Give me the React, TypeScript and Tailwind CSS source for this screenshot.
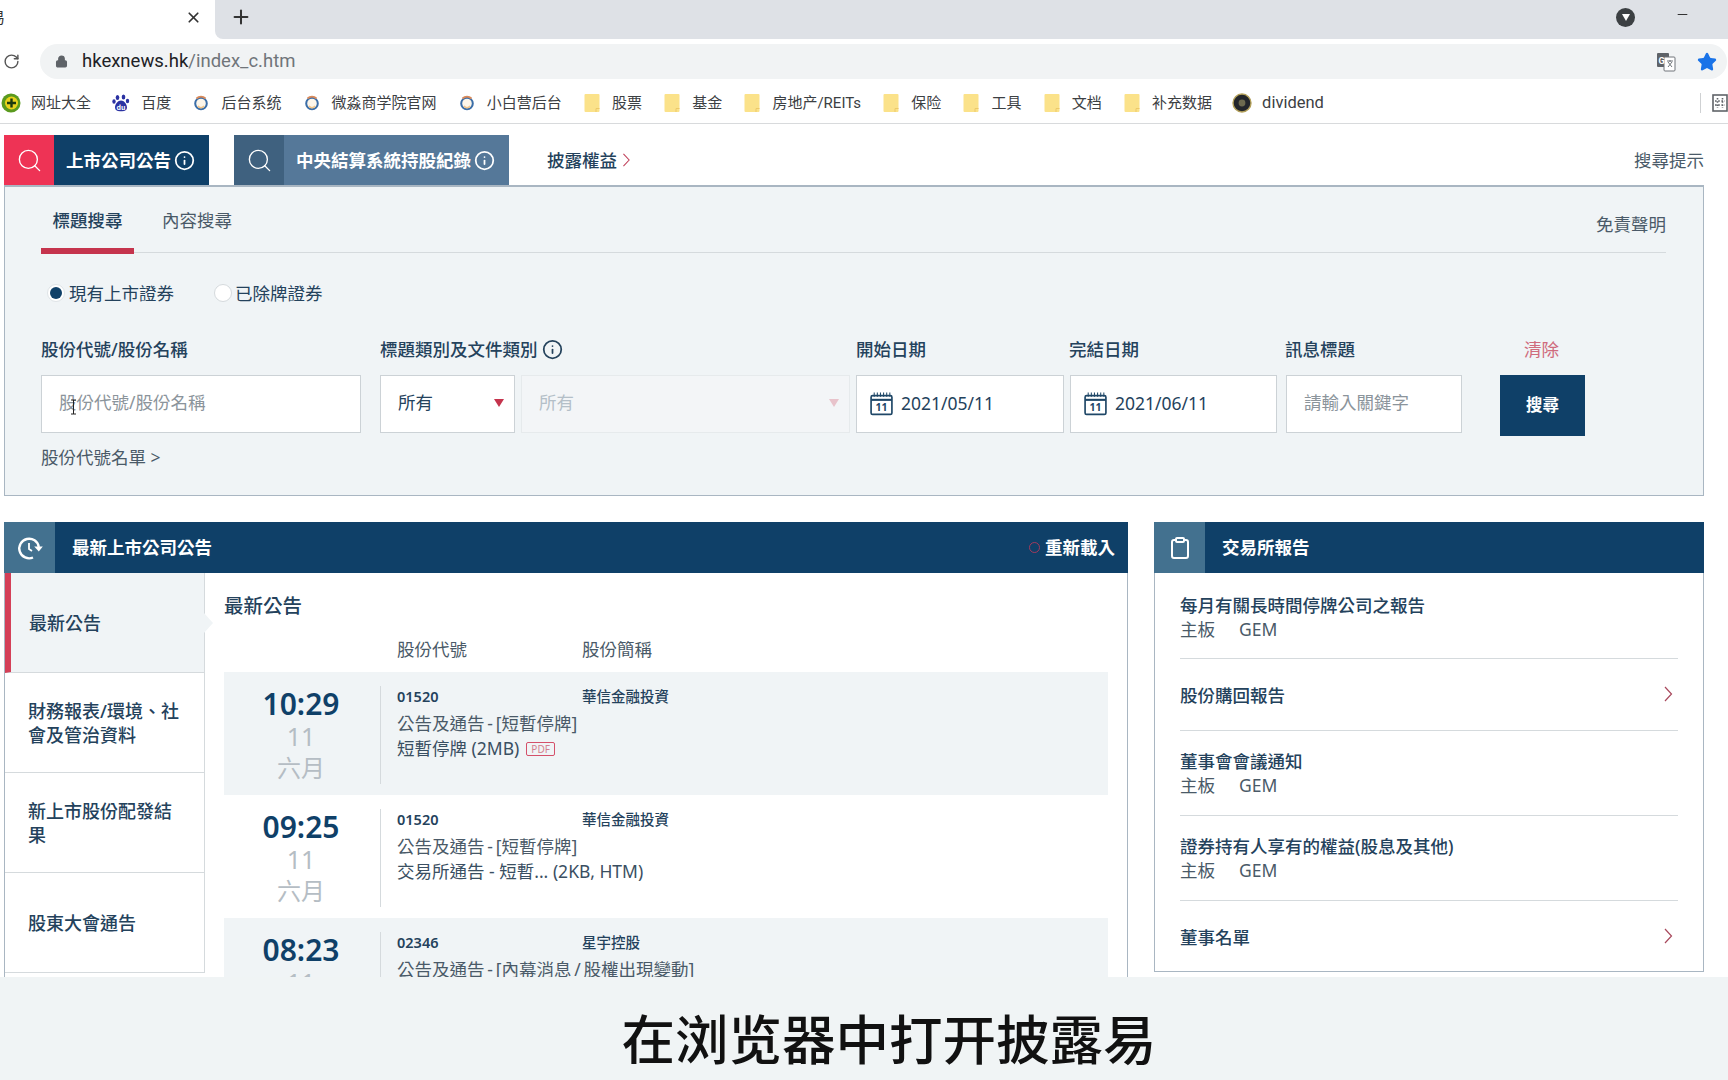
import React from 'react';
import { Lock, RotateCw, Plus, X, Search, Info, Star, Clipboard, Minus } from 'lucide-react';

const bookmarks = [
  { label: '网址大全', icon: 'plus' },
  { label: '百度', icon: 'paw' },
  { label: '后台系统', icon: 'ring' },
  { label: '微淼商学院官网', icon: 'ring' },
  { label: '小白营后台', icon: 'ring' },
  { label: '股票', icon: 'folder' },
  { label: '基金', icon: 'folder' },
  { label: '房地产/REITs', icon: 'folder' },
  { label: '保险', icon: 'folder' },
  { label: '工具', icon: 'folder' },
  { label: '文档', icon: 'folder' },
  { label: '补充数据', icon: 'folder' },
  { label: 'dividend', icon: 'seal' },
];

const sideItems = [
  { label: '最新公告', active: true },
  { label: '財務報表/環境、社會及管治資料' },
  { label: '新上市股份配發結果' },
  { label: '股東大會通告' },
];

const rows = [
  { time: '10:29', code: '01520', name: '華信金融投資', type: '公告及通告 - [短暫停牌]', file: '短暫停牌', size: '(2MB)', pdf: true, shaded: true },
  { time: '09:25', code: '01520', name: '華信金融投資', type: '公告及通告 - [短暫停牌]', file: '交易所通告 - 短暫...', size: '(2KB, HTM)', pdf: false, shaded: false },
  { time: '08:23', code: '02346', name: '星宇控股', type: '公告及通告 - [內幕消息 / 股權出現變動]', file: '', size: '', pdf: false, shaded: true },
];

const reports = [
  { label: '每月有關長時間停牌公司之報告', boards: true, height: 'h-[84px]' },
  { label: '股份購回報告', boards: false, height: 'h-[72px]' },
  { label: '董事會會議通知', boards: true, height: 'h-[85px]' },
  { label: '證券持有人享有的權益(股息及其他)', boards: true, height: 'h-[85px]' },
  { label: '董事名單', boards: false, height: 'h-[72px]' },
];

function BookmarkIcon({ kind }: { kind: string }) {
  if (kind === 'plus') {
    return (
      <svg width="20" height="20" viewBox="0 0 20 20">
        <circle cx="10" cy="10" r="9.5" fill="#5a9a1e" />
        <circle cx="10.500" cy="10" r="6.500" fill="#e8d21c" />
        <path d="M10.500 5.500v9M6 10h9" stroke="#1d3a10" strokeWidth="2.4" />
      </svg>
    );
  }
  if (kind === 'paw') {
    return (
      <svg width="18" height="18" viewBox="0 0 18 18" fill="#2b32a2">
        <ellipse cx="5.500" cy="3.500" rx="1.800" ry="2.500" />
        <ellipse cx="11.500" cy="3" rx="1.800" ry="2.500" />
        <ellipse cx="2" cy="7.500" rx="1.700" ry="2.300" />
        <ellipse cx="15.500" cy="7" rx="1.700" ry="2.300" />
        <path d="M9 6.500c3 0 6 3.500 6 7 0 3-2.500 4-6 3.700-3.500.3-6-.7-6-3.700 0-3.500 3-7 6-7z" />
        <text x="9" y="15.500" textAnchor="middle" fontSize="7" fontWeight="700" fill="#fff">du</text>
      </svg>
    );
  }
  if (kind === 'ring') {
    return (
      <svg width="20" height="20" viewBox="0 0 20 20">
        <circle cx="10" cy="10.500" r="5.800" fill="#fdf6ea" stroke="#3b6ea8" strokeWidth="2" />
        <path d="M5.500 5.500a6.500 6.500 0 0 1 9 0" fill="none" stroke="#d98a5a" strokeWidth="1.800" />
        <path d="M7 13a3.500 3.500 0 0 0 6 0" fill="none" stroke="#f0c48a" strokeWidth="1.500" />
      </svg>
    );
  }
  if (kind === 'seal') {
    return (
      <svg width="20" height="20" viewBox="0 0 20 20">
        <circle cx="10" cy="10" r="9" fill="#23262b" stroke="#b3a05a" strokeWidth="1.400" />
        <circle cx="10" cy="10" r="3.400" fill="#6d6a4f" />
      </svg>
    );
  }
  return (
    <svg width="16" height="18" viewBox="0 0 16 18">
      <rect x="0.500" y="0" width="15" height="18" rx="1" fill="#fbe28a" />
      <path d="M12 18v-3.500h3.500" fill="none" stroke="#ecc96a" strokeWidth="1" />
    </svg>
  );
}

function Chevron({ className }: { className?: string }) {
  return (
    <svg width="9" height="16" viewBox="0 0 9 16" fill="none" stroke="currentColor" strokeWidth="1.2" className={className}>
      <path d="M1 1l6.500 7L1 15" />
    </svg>
  );
}

function CalendarIcon() {
  return (
    <svg width="25" height="25" viewBox="0 0 24 24" fill="none" stroke="#1f4767" strokeWidth="1.600" className="shrink-0">
      <rect x="2" y="4.500" width="20" height="18" rx="1.500" />
      <path d="M2 8.500h20" strokeWidth="2" />
      <path d="M5 1.500v4M8 1.500v4M11 1.500v4M14 1.500v4M17 1.500v4M20 1.500v4" strokeWidth="1" />
      <text x="12" y="19.500" textAnchor="middle" fontSize="10" fontWeight="700" fill="#1f4767" stroke="none">11</text>
    </svg>
  );
}

function HistoryIcon() {
  return (
    <svg width="26" height="26" viewBox="0 0 26 26" fill="none" stroke="#fff" strokeWidth="2.400">
      <path d="M16 22.500A9.800 9.800 0 1 1 21.800 12" />
      <path d="M17.200 11.500l4.600 5 4-5z" fill="#fff" stroke="none" />
      <path d="M12 8v6l3 2" strokeWidth="1.800" />
    </svg>
  );
}

function PanelHeader({ title, icon, right }: { title: string; icon: React.ReactNode; right?: React.ReactNode }) {
  return (
    <div className="flex h-[51px] items-center bg-[#0f4068] text-white">
      <div className="flex h-full w-[51px] items-center justify-center bg-[#43718f]">{icon}</div>
      <span className="ml-[17px] text-[17.500px] font-bold leading-none">{title}</span>
      {right}
    </div>
  );
}

function DateInput({ value, width }: { value: string; width: string }) {
  return (
    <div className={`flex h-[58px] items-center gap-[7px] border border-[#ccd2d6] bg-white pb-[2px] pl-[12px] text-[17.500px] text-[#24425c] ${width}`}>
      <CalendarIcon />
      <span>{value}</span>
    </div>
  );
}

export default function App() {
  return (
    <div className="flex h-[1080px] w-[1728px] flex-col overflow-hidden bg-white font-['Noto_Sans','Noto_Sans_CJK_TC',sans-serif] text-[#24425c]">
      {/* browser chrome */}
      <div className="flex h-[39px] shrink-0 bg-white">
        <div className="flex w-[215px] items-center justify-end overflow-hidden pb-[4px] pr-[13px] text-[#333]">
          <span className="mr-auto -ml-[10px] text-[15px]">易</span>
          <X size={17} strokeWidth={2.400} />
        </div>
        <div className="flex flex-1 items-center rounded-bl-lg bg-[#dee1e6] pb-[5px] pl-[15px] text-[#333]">
          <Plus size={22} strokeWidth={2.200} />
          <div className="ml-auto flex h-[19px] w-[19px] items-center justify-center rounded-full bg-[#3c4043]">
            <div className="h-0 w-0 border-x-[4.500px] border-t-[7px] border-x-transparent border-t-white" />
          </div>
          <Minus size={15} strokeWidth={1.800} className="mb-[5px] ml-[40px] mr-[38px]" />
        </div>
      </div>

      <div className="flex h-[40px] shrink-0 items-end">
        <div className="flex h-[35px] w-[40px] items-center pl-[3px] text-[#555]">
          <RotateCw size={17} strokeWidth={2} />
        </div>
        <div className="mr-[1px] flex h-[35px] flex-1 items-center rounded-full bg-[#f1f3f4] pl-[15px] font-['Roboto',sans-serif] text-[18.500px]">
          <Lock size={13} fill="#5f6368" stroke="#5f6368" strokeWidth={2.400} />
          <span className="ml-[14px] text-[#202124]">hkexnews.hk</span>
          <span className="text-[#70757a]">/index_c.htm</span>
          <svg width="20" height="20" viewBox="0 0 20 20" className="ml-auto">
            <rect x="1" y="1" width="12" height="14" rx="1" fill="#5f6368" />
            <rect x="8" y="5" width="11" height="14" rx="1" fill="#fff" stroke="#70757a" />
            <text x="5.500" y="11.500" textAnchor="middle" fontSize="9" fontWeight="700" fill="#fff">G</text>
            <path d="M11 9h6M14 8v2M12 15l4-5M12 10l4 5" stroke="#70757a" strokeWidth="1" fill="none" />
          </svg>
          <Star size={20} fill="#1a73e8" stroke="#1a73e8" className="ml-[21px] mr-[10px]" />
        </div>
      </div>

      <div className="flex h-[45px] shrink-0 items-center gap-[20.200px] border-b border-[#d8dadc] pl-[1px] pt-[4px] font-['Noto_Sans_CJK_SC',sans-serif] text-[15px] text-[#3c4043]">
        {bookmarks.map((b) => (
          <div key={b.label} className="flex items-center">
            <span className="flex w-[20px] justify-center">
              <BookmarkIcon kind={b.icon} />
            </span>
            <span className={`ml-[10px] whitespace-nowrap font-['Roboto','Noto_Sans_CJK_SC',sans-serif] ${b.icon === 'seal' ? 'text-[16.500px]' : ''}`}>
              {b.label}
            </span>
          </div>
        ))}
        <div className="ml-auto flex h-[20px] items-center border-l border-[#cfd1d3] pl-[11px]">
          <svg width="16" height="18" viewBox="0 0 16 18" fill="none" stroke="#5f6368" strokeWidth="1.600">
            <rect x="1" y="1" width="14" height="16" />
            <path d="M5.500 4v10M10.500 4v10M3 7h10M3 11h10" strokeDasharray="1.600 1.600" />
          </svg>
        </div>
      </div>

      {/* page */}
      <div className="h-[853px] shrink-0 overflow-hidden pt-[11px] pl-[4px]">
        <div className="flex h-[50px] w-[1700px]">
          <div className="flex h-full w-[50px] items-center justify-center bg-[#ee3355]">
            <Search size={27} strokeWidth={1.200} className="text-white" />
          </div>
          <div className="flex h-full w-[155px] items-center justify-center gap-[3px] pr-[2px] bg-[#0f4068] text-[17.500px] font-bold text-white">
            上市公司公告
            <Info size={21} strokeWidth={2} />
          </div>
          <div className="ml-[25px] flex h-full w-[50px] items-center justify-center bg-[#3f617f]">
            <Search size={27} strokeWidth={1.200} className="text-white" />
          </div>
          <div className="flex h-full w-[225px] items-center justify-center gap-[3px] pr-[2px] bg-[#557899] text-[17.500px] font-bold text-white">
            中央結算系統持股紀錄
            <Info size={21} strokeWidth={2} />
          </div>
          <div className="ml-[38px] flex items-center gap-[5px] text-[17.500px] font-medium">
            披露權益
            <Chevron className="h-[14px] text-[#c0405a]" />
          </div>
          <div className="ml-auto flex items-center text-[17.500px] text-[#4a5a68]">搜尋提示</div>
        </div>

        <div className="h-[311px] w-[1700px] border border-t-2 border-[#a9b6c2] bg-[#f0f4f6] pl-[36px] pr-[37px]">
          <div className="flex h-[66px] border-b border-[#d5dadd]">
            <div className="relative flex h-full w-[93px] items-center justify-center pt-[1px] text-[17.500px] font-medium">
              標題搜尋
              <div className="absolute -bottom-[2px] left-0 h-[6px] w-full bg-[#c5344d]" />
            </div>
            <div className="ml-[28px] flex h-full items-center pt-[1px] text-[17.500px] text-[#4a5a68]">內容搜尋</div>
            <div className="ml-auto flex h-full items-center pt-[9px] text-[17.500px] text-[#4a5a68]">免責聲明</div>
          </div>

          <div className="mt-[28px] flex h-[24px] items-center pl-[6px] text-[17.500px]">
            <span className="flex h-[18px] w-[18px] items-center justify-center rounded-full border border-[#dfe4e7] bg-white">
              <span className="h-[12px] w-[12px] rounded-full bg-[#0f4068]" />
            </span>
            <span className="ml-[4px]">現有上市證券</span>
            <span className="ml-[40px] h-[18px] w-[18px] rounded-full border border-[#d5dadd] bg-white" />
            <span className="ml-[3px]">已除牌證券</span>
          </div>

          <div className="mt-[32px] flex h-[24px] items-center text-[17.500px] font-medium">
            <span className="w-[339px]">股份代號/股份名稱</span>
            <span className="flex w-[476px] items-center gap-[4px]">
              標題類別及文件類別
              <Info size={21} strokeWidth={2} />
            </span>
            <span className="w-[213px]">開始日期</span>
            <span className="w-[216px]">完結日期</span>
            <span className="w-[239px]">訊息標題</span>
            <span className="font-normal text-[#cf6b7d]">清除</span>
          </div>

          <div className="mt-[14px] flex items-start">
            <div className="relative flex h-[58px] w-[320px] items-center border border-[#ccd2d6] bg-white pb-[3px] pl-[17px] text-[17.500px] text-[#8b949b]">
              股份代號/股份名稱
              <svg width="7" height="16" viewBox="0 0 7 16" fill="none" stroke="#222" strokeWidth="1" className="absolute left-[28px] top-[23px]">
                <path d="M1 1h5M3.500 1v14M1 15h5" />
              </svg>
            </div>
            <div className="ml-[19px] flex h-[58px] w-[135px] items-center justify-between border border-[#ccd2d6] bg-white pb-[3px] pl-[17px] pr-[10px] text-[17.500px]">
              所有
              <div className="h-0 w-0 border-x-[5px] border-t-[8px] border-x-transparent border-t-[#c5344d]" />
            </div>
            <div className="ml-[6px] flex h-[58px] w-[329px] items-center justify-between border border-[#e6eaec] bg-[#f3f5f7] pb-[3px] pl-[17px] pr-[10px] text-[17.500px] text-[#b4bfc8]">
              所有
              <div className="h-0 w-0 border-x-[5px] border-t-[8px] border-x-transparent border-t-[#e8c3cb]" />
            </div>
            <div className="ml-[6px]">
              <DateInput value="2021/05/11" width="w-[208px]" />
            </div>
            <div className="ml-[6px]">
              <DateInput value="2021/06/11" width="w-[207px]" />
            </div>
            <div className="ml-[9px] flex h-[58px] w-[176px] items-center border border-[#ccd2d6] bg-white pb-[3px] pl-[17px] text-[17.500px] text-[#8b949b]">
              請輸入關鍵字
            </div>
            <div className="ml-[38px] flex h-[61px] w-[85px] items-center justify-center bg-[#0f4068] text-[16.500px] font-bold text-white">
              搜尋
            </div>
          </div>

          <div className="mt-[9px] text-[17.500px] leading-[24px] text-[#4a5a68]">股份代號名單 &gt;</div>
        </div>

        <div className="mt-[26px] flex w-[1700px] gap-[26px]">
          <div className="h-[600px] w-[1124px] border-x border-[#a9b6c2]">
            <div className="-mx-px">
              <PanelHeader
                title="最新上市公司公告"
                icon={<HistoryIcon />}
                right={
                  <span className="ml-auto mr-[13px] flex items-center gap-[5px] text-[17.500px] font-bold">
                    <span className="h-[11px] w-[11px] rounded-full border border-[#a33a5c]" />
                    重新載入
                  </span>
                }
              />
            </div>
            <div className="flex">
              <div className="w-[200px] shrink-0">
                {sideItems.map((s) => (
                  <div
                    key={s.label}
                    className={`relative flex h-[100px] items-center border-r border-b border-[#d5dadd] pr-[18px] text-[18px] font-medium leading-[24px] ${
                      s.active ? 'border-l-[6px] border-l-[#d43f57] bg-[#f0f4f6] pl-[18px]' : 'pl-[23px]'
                    }`}
                  >
                    {s.label}
                    {s.active && (
                      <div className="absolute -right-[9px] top-[40px] h-0 w-0 border-y-[10px] border-l-[9px] border-y-transparent border-l-[#f0f4f6]" />
                    )}
                  </div>
                ))}
              </div>
              <div className="flex-1 pl-[19px] pr-[19px]">
                <div className="flex h-[66px] items-center text-[19.500px] font-medium">最新公告</div>
                <div className="flex h-[33px] items-start text-[17.500px] leading-[20px] text-[#4a5a68]">
                  <span className="ml-[173px] w-[185px]">股份代號</span>
                  <span>股份簡稱</span>
                </div>
                {rows.map((r) => (
                  <div key={r.time} className={`flex h-[123px] pt-[14px] ${r.shaded ? 'bg-[#f0f4f6]' : ''}`}>
                    <div className="flex h-[98px] w-[156px] flex-col items-center pr-[2px] pt-[1px]">
                      <span className="text-[30px] font-semibold leading-[34px] text-[#0f4068]">{r.time}</span>
                      <span className="text-[25px] leading-[30px] text-[#b5bdc4]">11</span>
                      <span className="mt-[2px] text-[24px] leading-[30px] text-[#b5bdc4]">六月</span>
                    </div>
                    <div className="h-[98px] border-l border-[#d5dadd] pl-[16px]">
                      <div className="flex h-[22px] items-center text-[14.500px] font-semibold">
                        <span className="w-[185px]">{r.code}</span>
                        <span className="font-medium">{r.name}</span>
                      </div>
                      <div className="mt-[3px] text-[17.500px] leading-[25px] text-[#4a5a68] [word-spacing:-1.800px]">{r.type}</div>
                      {r.file && (
                        <div className="flex items-center gap-[7px] text-[17.500px] leading-[25px] text-[#3a4f62]">
                          <span>{r.file} {r.size}</span>
                          {r.pdf && (
                            <span className="rounded-[2px] border border-[#d4506a] px-[4px] text-[10px] leading-[12px] text-[#d4808f]">PDF</span>
                          )}
                        </div>
                      )}
                    </div>
                  </div>
                ))}
              </div>
            </div>
          </div>

          <div className="h-[450px] w-[550px] border-x border-b border-[#a9b6c2]">
            <div className="-mx-px">
              <PanelHeader title="交易所報告" icon={<Clipboard size={24} strokeWidth={2} />} />
            </div>
            <div className="px-[25px] pt-[2px]">
              {reports.map((r, i) => (
                <div
                  key={r.label}
                  className={`flex items-center justify-between ${r.height} ${i < reports.length - 1 ? 'border-b border-[#d5dadd]' : ''}`}
                >
                  <div className="text-[17.500px] leading-[24px]">
                    <div className="font-medium">{r.label}</div>
                    {r.boards && (
                      <div className="text-[#4a5a68]">
                        主板<span className="ml-[24px]">GEM</span>
                      </div>
                    )}
                  </div>
                  {!r.boards && <Chevron className="mb-[2px] mr-[5px] text-[#a8485c]" />}
                </div>
              ))}
            </div>
          </div>
        </div>
      </div>

      {/* caption */}
      <div className="flex h-[103px] shrink-0 items-center justify-center bg-[#f0f4f5] pl-[50px] pt-[18px] font-['Noto_Sans_CJK_SC',sans-serif] text-[53.500px] font-medium text-[#111]">
        在浏览器中打开披露易
      </div>
    </div>
  );
}
